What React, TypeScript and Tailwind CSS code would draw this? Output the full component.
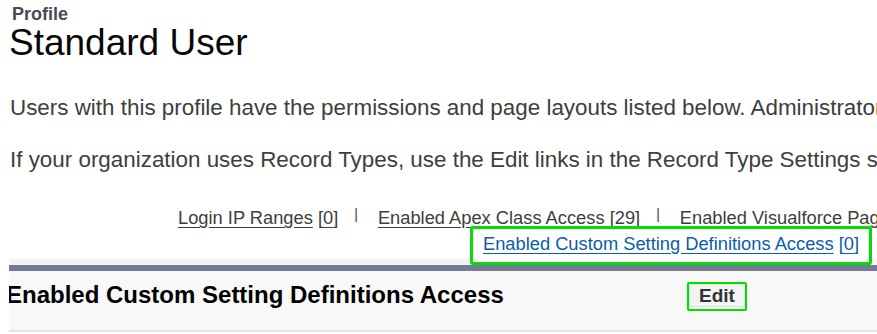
import React from "react";

export default function App() {
  return (
    <div className="w-[877px] h-[334px] overflow-hidden bg-white font-['Liberation_Sans',Arial,sans-serif]">
      <div className="pl-[12px] pt-[4px] text-[18px] leading-[20px] font-bold text-[#4a4a56]">Profile</div>
      <h1 className="pl-[9px] text-[37px] leading-[38px] text-[#080707] whitespace-nowrap">Standard User</h1>

      <p className="mt-[33px] pl-[10px] text-[22.4px] leading-[26px] text-[#3e3e3c] whitespace-nowrap">
        Users with this profile have the permissions and page layouts listed below. Administrators can change a user's profile.
      </p>
      <p className="mt-[26px] pl-[10px] text-[22.4px] leading-[26px] text-[#3e3e3c] whitespace-nowrap">
        If your organization uses Record Types, use the Edit links in the Record Type Settings section below.
      </p>

      <div className="mt-[34px] pl-[178px] flex items-center whitespace-nowrap text-[18.3px] leading-[22px] text-[#3e3e3c]">
        <a className="underline underline-offset-[3px]">Login IP Ranges</a>
        <span>&nbsp;[<span className="underline underline-offset-[3px]">0</span>]</span>
        <span className="pl-[16px] pr-[20px] text-[14px] leading-[14px] relative top-[-4px] text-[#3e3e3c]">|</span>
        <a className="underline underline-offset-[3px]">Enabled Apex Class Access</a>
        <span>&nbsp;[<span className="underline underline-offset-[3px]">29</span>]</span>
        <span className="pl-[16px] pr-[20px] text-[14px] leading-[14px] relative top-[-4px] text-[#3e3e3c]">|</span>
        <a className="underline underline-offset-[3px]">Enabled Visualforce Page Access</a>
        <span>&nbsp;[<span className="underline underline-offset-[3px]">0</span>]</span>
      </div>

      <div className="pl-[470px] mt-[-3px] mb-[-6px] flex relative z-10">
        <div className="w-[402px] border-[3px] border-[#00e000] rounded-[3px] bg-white pl-[10px] pt-[4px] pb-[7px] whitespace-nowrap text-[18.3px] leading-[22px] text-[#0b5cab]">
          <a className="underline underline-offset-[3px]">Enabled Custom Setting Definitions Access</a>
          <span>&nbsp;[<span className="underline underline-offset-[3px]">0</span>]</span>
        </div>
      </div>

      <div className="ml-[9px]">
        <div className="h-[6px] bg-[#f3f3f3]" />
        <div className="h-[6px] bg-[#747b93]" />
        <div className="h-[59px] overflow-hidden bg-[#f8f8f8] border-b-[2px] border-[#e4e4e4] box-content flex items-start">
          <h2 className="mt-[10px] ml-[-3px] w-[681px] shrink-0 text-[24px] leading-[28px] font-bold text-black whitespace-nowrap">
            Enabled Custom Setting Definitions Access
          </h2>
          <div className="mt-[11px] border-[2px] border-[#00e000] rounded-[2px]">
            <button className="px-[9px] py-[1px] bg-[#f3f3f3] text-[19px] leading-[19px] font-bold text-[#333] border border-[#e0e0e0] rounded-[2px]">
              Edit
            </button>
          </div>
        </div>
      </div>
    </div>
  );
}
